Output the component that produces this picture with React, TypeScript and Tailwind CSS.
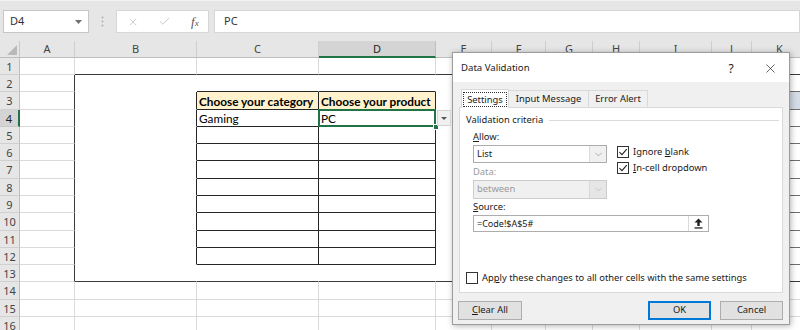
import { X, Check, ChevronDown } from "lucide-react";

const COLS = ["A", "B", "C", "D", "E", "F", "G", "H", "I", "J", "K"];
const ROWS = Array.from({ length: 16 }, (_, i) => i + 1);

const TEXTS: Record<string, { text: string; bold?: boolean }> = {
  "3-3": { text: "Choose your category", bold: true },
  "3-4": { text: "Choose your product", bold: true },
  "4-3": { text: "Gaming" },
  "4-4": { text: "PC" },
};

// border colours for a cell at row r, column c (A = 1)
function rightCls(r: number, c: number) {
  if (c >= 2 && c <= 4 && r >= 3 && r <= 12) return "border-r-[#262626]";
  if (c === 1 && r >= 2 && r <= 13) return "border-r-[#3a3a3a]";
  if (c >= 2 && r >= 2 && r <= 13) return "border-r-white";
  return "border-r-[#dadada]";
}

function bottomCls(r: number, c: number) {
  if ((c === 3 || c === 4) && r >= 2 && r <= 12) return "border-b-[#262626]";
  if (c >= 2 && (r === 1 || r === 13)) return "border-b-[#3a3a3a]";
  if (c === 11 && r >= 2 && r <= 12) return "border-b-[#6f6f6f]";
  if (c >= 2 && r >= 2 && r <= 13) return "border-b-white";
  return "border-b-[#dadada]";
}

function bgCls(r: number, c: number) {
  if (r === 3 && (c === 3 || c === 4)) return "bg-[#fff2cc]";
  if (r === 3 && c === 11) return "bg-[#d5dce6]";
  return "bg-white";
}

function FormulaBar() {
  return (
    <div className="h-[41px] bg-[#e6e6e6] border-t border-t-[#f2f2f2] pt-[9px]">
      <div className="flex h-[23px] items-stretch">
        <div className="ml-[3px] w-[86px] bg-white border border-[#c6c6c6] flex items-center pl-[6px] pr-[6px] text-[11px] text-[#333]">
          <span>D4</span>
          <svg className="ml-auto" width="7" height="4" viewBox="0 0 7 4">
            <path d="M0 0 H7 L3.5 4 Z" fill="#707070" />
          </svg>
        </div>
        <div className="w-[27px] flex items-center justify-center">
          <svg width="3" height="11" viewBox="0 0 3 11">
            <circle cx="1.5" cy="1.5" r="1" fill="#b0b0b0" />
            <circle cx="1.5" cy="5.5" r="1" fill="#b0b0b0" />
            <circle cx="1.5" cy="9.5" r="1" fill="#b0b0b0" />
          </svg>
        </div>
        <div className="w-[93px] bg-white border border-[#d6d6d6] flex items-center">
          <X className="ml-[10px]" size={12} strokeWidth={1.3} color="#b4b4b4" />
          <Check className="ml-[19px]" size={13} strokeWidth={1.3} color="#b4b4b4" />
          <span className="ml-[20px] italic font-['Liberation_Serif',serif] text-[13px] text-[#555] leading-none">
            f<span className="text-[9px]">x</span>
          </span>
        </div>
        <div className="ml-[5px] flex-1 bg-white border border-[#d6d6d6] flex items-center pl-[9px] text-[11px] text-[#333]">
          PC
        </div>
      </div>
    </div>
  );
}

function Sheet() {
  return (
    <div className="w-[808px] grid grid-cols-[20px_55px_122px_122px_117px_56px_54px_47px_47px_72px_40px_56px] grid-rows-[17px_17px_17px_18px_17px_17px_17px_18px_17px_17px_18px_17px_17px_17px_18px_17px_17px] text-[11px] text-[#444]">
      {/* header row */}
      <div className="bg-[#e6e6e6] border-r border-b border-r-[#c8c8c8] border-b-[#bdbdbd] flex items-end justify-end pr-[2px] pb-[2px]">
        <svg width="10" height="10" viewBox="0 0 10 10">
          <path d="M10 0 V10 H0 Z" fill="#b9b9b9" />
        </svg>
      </div>
      {COLS.map((l) =>
        l === "D" ? (
          <div
            key={l}
            className="bg-[#d4d4d4] border-r border-r-[#c0c0c0] border-b-2 border-b-[#217346] flex items-center justify-center pt-[1px] text-[#1f1f1f]"
          >
            {l}
          </div>
        ) : (
          <div
            key={l}
            className="bg-[#e6e6e6] border-r border-b border-r-[#cfcfcf] border-b-[#bdbdbd] flex items-center justify-center pt-[1px]"
          >
            {l}
          </div>
        )
      )}
      {ROWS.map((r) => [
        r === 4 ? (
          <div
            key={`h${r}`}
            className="bg-[#d4d4d4] border-r-2 border-b border-r-[#217346] border-b-[#c8c8c8] flex items-center justify-center pt-[2px] text-[#1f1f1f]"
          >
            {r}
          </div>
        ) : (
          <div
            key={`h${r}`}
            className="bg-[#e6e6e6] border-r border-b border-r-[#bdbdbd] border-b-[#d0d0d0] flex items-center justify-center pt-[2px]"
          >
            {r}
          </div>
        ),
        ...COLS.map((_, i) => {
          const c = i + 1;
          const t = TEXTS[`${r}-${c}`];
          const active = r === 4 && c === 4;
          return (
            <div
              key={`${r}-${c}`}
              className={`relative ${active ? "z-10" : ""} border-r border-b ${rightCls(r, c)} ${bottomCls(r, c)} ${bgCls(r, c)} flex items-end pb-[1px] pl-[2px] font-['Lato',sans-serif] text-[11.8px] leading-[13px] text-black whitespace-nowrap`}
            >
              {t && <span className={t.bold ? "font-bold" : ""}>{t.text}</span>}
              {active && (
                <>
                  <div className="absolute -left-[1px] -top-[1px] -right-[1px] -bottom-[1px] border-2 border-[#217346]" />
                  <div className="absolute -right-[4px] -bottom-[4px] w-[6px] h-[6px] bg-[#217346] border border-white" />
                  <div className="absolute left-[calc(100%+2px)] top-[0px] w-[14px] h-[16px] bg-[#f0f0f0] border border-[#d4d4d4] flex items-center justify-center">
                    <svg width="6" height="3" viewBox="0 0 6 3">
                      <path d="M0 0 H6 L3 3 Z" fill="#555" />
                    </svg>
                  </div>
                </>
              )}
            </div>
          );
        }),
      ])}
    </div>
  );
}

function CheckBox({ checked }: { checked?: boolean }) {
  return (
    <span className="w-[12px] h-[12px] border border-[#333] bg-white flex items-center justify-center shrink-0">
      {checked && (
        <svg width="10" height="10" viewBox="0 0 10 10">
          <path d="M1.4 5.2 L4 7.7 L8.7 2.1" fill="none" stroke="#222" strokeWidth="1.1" />
        </svg>
      )}
    </span>
  );
}

function Select({ value, disabled, h }: { value: string; disabled?: boolean; h: string }) {
  return (
    <div
      className={`w-[134px] ${h} flex border ${
        disabled ? "border-[#cccccc] bg-[#f0f0f0] text-[#9a9a9a]" : "border-[#adadad] bg-white text-[#1a1a1a]"
      }`}
    >
      <span className="flex-1 flex items-center pl-[3px]">{value}</span>
      <span
        className={`w-[17px] flex items-center justify-center border-l ${
          disabled ? "border-l-[#d8d8d8] bg-[#e6e6e6]" : "border-l-[#dadada] bg-[#f0f0f0]"
        }`}
      >
        <ChevronDown size={11} strokeWidth={1.3} color={disabled ? "#b0b0b0" : "#808080"} />
      </span>
    </div>
  );
}

function DataValidationDialog() {
  return (
    <div className="absolute left-[452px] top-[52px] w-[338px] h-[273px] bg-[#f0f0f0] border border-[#9c9c9c] shadow-[1px_1px_6px_rgba(0,0,0,0.3)] flex flex-col font-['Noto_Sans',sans-serif] text-[9.4px] text-[#1a1a1a]">
      <div className="h-[29px] shrink-0 bg-white flex items-center pl-[8px] pt-[2px]">
        <span className="text-[9.6px]">Data Validation</span>
        <span className="ml-auto w-[14px] text-center text-[12px]">?</span>
        <span className="ml-[22px] mr-[9px] w-[20px] flex justify-center">
          <X size={15} strokeWidth={1.1} color="#222" />
        </span>
      </div>

      <div className="flex-1 flex flex-col px-[6px]">
        {/* tabs */}
        <div className="mt-[7px] pl-[2px] flex items-end h-[18px]">
          <div className="w-[48px] h-[19px] -mb-px relative z-10 bg-white border border-[#d9d9d9] border-b-0 flex items-center justify-center">
            <span className="border border-dotted border-[#333] px-[3px] leading-[13px]">Settings</span>
          </div>
          <div className="w-[80px] h-[17px] bg-[#f0f0f0] border border-[#d9d9d9] border-b-0 border-l-0 flex items-center justify-center">
            Input Message
          </div>
          <div className="w-[59px] h-[17px] bg-[#f0f0f0] border border-[#d9d9d9] border-b-0 border-l-0 flex items-center justify-center">
            Error Alert
          </div>
        </div>

        {/* panel */}
        <div className="h-[186px] bg-white border border-[#d9d9d9] flex flex-col">
          <div className="mt-[5px] ml-[6px] mr-[3px] flex items-center h-[14px]">
            <span>Validation criteria</span>
            <span className="ml-[6px] flex-1 h-px bg-[#dcdcdc]" />
          </div>

          <div className="ml-[13px] mt-[3px] flex flex-col">
            <span className="h-[14px] leading-[14px]">
              <span className="underline">A</span>llow:
            </span>
            <div className="mt-[1px] flex">
              <Select value="List" h="h-[18px]" />
              <div className="ml-[10px] h-[18px] flex flex-col -mt-[1px]">
                <div className="h-[16px] shrink-0 flex items-center gap-[4px]">
                  <CheckBox checked />
                  <span>
                    Ignore <span className="underline">b</span>lank
                  </span>
                </div>
                <div className="h-[16px] shrink-0 flex items-center gap-[4px]">
                  <CheckBox checked />
                  <span>
                    <span className="underline">I</span>n-cell dropdown
                  </span>
                </div>
              </div>
            </div>
            <span className="mt-[2px] h-[14px] leading-[14px] text-[#9a9a9a]">Data:</span>
            <div className="mt-[1px]">
              <Select value="between" disabled h="h-[19px]" />
            </div>
            <span className="mt-[1px] h-[14px] leading-[14px]">
              <span className="underline">S</span>ource:
            </span>
            <div className="mt-[1px] w-[236px] h-[17px] border border-[#adadad] flex">
              <span className="flex-1 flex items-center pl-[3px] text-[9px]">=Code!$A$5#</span>
              <span className="w-[20px] flex items-center justify-center border-l border-l-[#dadada]">
                <svg width="9" height="11" viewBox="0 0 9 11">
                  <path d="M4.5 0.5 L8.5 4.5 H5.7 V8 H3.3 V4.5 H0.5 Z" fill="#222" />
                  <rect x="0.5" y="9.3" width="8" height="1.3" fill="#222" />
                </svg>
              </span>
            </div>
          </div>

          <div className="mt-auto mb-[7px] ml-[6px] flex items-center gap-[4px]">
            <CheckBox />
            <span>
              Ap<span className="underline">p</span>ly these changes to all other cells with the same settings
            </span>
          </div>
        </div>

        {/* buttons */}
        <div className="mt-[8px] flex items-center">
          <div className="-ml-[1px] w-[64px] h-[19px] bg-[#e1e1e1] border border-[#adadad] flex items-center justify-center">
            <span>
              <span className="underline">C</span>lear All
            </span>
          </div>
          <div className="ml-auto w-[63px] h-[19px] bg-[#e1e1e1] border-2 border-[#0078d7] flex items-center justify-center">
            OK
          </div>
          <div className="ml-[9px] w-[63px] h-[19px] bg-[#e1e1e1] border border-[#adadad] flex items-center justify-center">
            Cancel
          </div>
        </div>
      </div>
    </div>
  );
}

export default function App() {
  return (
    <div className="relative w-[800px] h-[330px] overflow-hidden bg-white font-['Noto_Sans',sans-serif] text-[#262626]">
      <FormulaBar />
      <Sheet />
      <DataValidationDialog />
    </div>
  );
}
